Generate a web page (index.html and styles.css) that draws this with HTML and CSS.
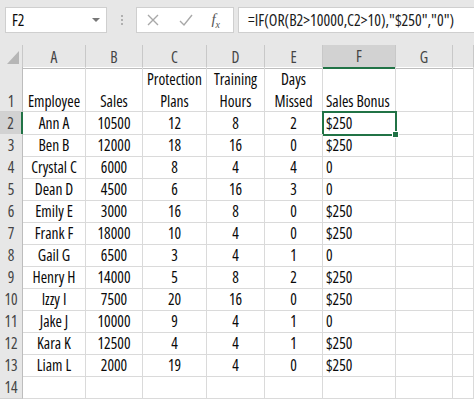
FILE: index.html
```html
<!DOCTYPE html>
<html>
<head>
    <title>Sales Bonus</title>
    <link rel="stylesheet" href="styles.css">
</head>
<body>
    <div class="toolbar">
        <div class="namebox">
            <span>F2</span>
            <span class="caret"></span>
        </div>
        <div class="grip"><i></i><i></i><i></i></div>
        <div class="fxbox">
            <svg class="icon" width="14" height="14" viewBox="0 0 14 14"><path d="M2 2L12 12M12 2L2 12" stroke="#a8a8a8" stroke-width="1.4" fill="none"/></svg>
            <svg class="icon" width="16" height="14" viewBox="0 0 16 14"><path d="M2 8L6 12L14 2" stroke="#a8a8a8" stroke-width="1.4" fill="none"/></svg>
            <span class="fx">f<sub>x</sub></span>
        </div>
        <div class="formula">=IF(OR(B2&gt;10000,C2&gt;10),"$250","0")</div>
    </div>

    <div class="sheet">
        <div class="row head">
            <div class="corner"><span class="tri"></span></div>
            <div>A</div><div>B</div><div>C</div><div>D</div><div>E</div><div class="on">F</div><div>G</div><div></div>
        </div>
        <div class="row tall">
            <div class="rh">1</div>
            <div>Employee</div><div>Sales</div><div>Protection<br>Plans</div><div>Training<br>Hours</div><div>Days<br>Missed</div><div class="l">Sales Bonus</div><div></div><div></div>
        </div>
        <div class="row">
            <div class="rh on">2</div>
            <div>Ann A</div><div>10500</div><div>12</div><div>8</div><div>2</div><div class="l active">$250<span class="handle"></span></div><div></div><div></div>
        </div>
        <div class="row">
            <div class="rh">3</div>
            <div>Ben B</div><div>12000</div><div>18</div><div>16</div><div>0</div><div class="l">$250</div><div></div><div></div>
        </div>
        <div class="row">
            <div class="rh">4</div>
            <div>Crystal C</div><div>6000</div><div>8</div><div>4</div><div>4</div><div class="l">0</div><div></div><div></div>
        </div>
        <div class="row">
            <div class="rh">5</div>
            <div>Dean D</div><div>4500</div><div>6</div><div>16</div><div>3</div><div class="l">0</div><div></div><div></div>
        </div>
        <div class="row">
            <div class="rh">6</div>
            <div>Emily E</div><div>3000</div><div>16</div><div>8</div><div>0</div><div class="l">$250</div><div></div><div></div>
        </div>
        <div class="row">
            <div class="rh">7</div>
            <div>Frank F</div><div>18000</div><div>10</div><div>4</div><div>0</div><div class="l">$250</div><div></div><div></div>
        </div>
        <div class="row">
            <div class="rh">8</div>
            <div>Gail G</div><div>6500</div><div>3</div><div>4</div><div>1</div><div class="l">0</div><div></div><div></div>
        </div>
        <div class="row">
            <div class="rh">9</div>
            <div>Henry H</div><div>14000</div><div>5</div><div>8</div><div>2</div><div class="l">$250</div><div></div><div></div>
        </div>
        <div class="row">
            <div class="rh">10</div>
            <div>Izzy I</div><div>7500</div><div>20</div><div>16</div><div>0</div><div class="l">$250</div><div></div><div></div>
        </div>
        <div class="row">
            <div class="rh">11</div>
            <div>Jake J</div><div>10000</div><div>9</div><div>4</div><div>1</div><div class="l">0</div><div></div><div></div>
        </div>
        <div class="row">
            <div class="rh">12</div>
            <div>Kara K</div><div>12500</div><div>4</div><div>4</div><div>1</div><div class="l">$250</div><div></div><div></div>
        </div>
        <div class="row">
            <div class="rh">13</div>
            <div>Liam L</div><div>2000</div><div>19</div><div>4</div><div>0</div><div class="l">$250</div><div></div><div></div>
        </div>
        <div class="row">
            <div class="rh">14</div>
            <div></div><div></div><div></div><div></div><div></div><div></div><div></div><div></div>
        </div>
    </div>
</body>
</html>
```

FILE: styles.css
```css
body {
    margin: 0;
    width: 474px;
    height: 399px;
    overflow: hidden;
    font-family: "Open Sans", sans-serif;
    font-stretch: 87.5%;
    font-size: 15.5px;
    color: #0a0a0a;
    background-color: white;
}

.toolbar {
    height: 45px;
    box-sizing: border-box;
    padding: 7px 0 0 5px;
    background-color: #e7e7e7;
    display: flex;
    align-items: flex-start;
}

.namebox,
.fxbox,
.formula {
    flex-shrink: 0;
    height: 26px;
    box-sizing: border-box;
    background-color: white;
    border: 1px solid #cfcfcf;
    display: flex;
    align-items: center;
}

.namebox {
    width: 102px;
    padding: 0 6px;
    justify-content: space-between;
}

.caret {
    width: 0;
    height: 0;
    border-left: 4px solid transparent;
    border-right: 4px solid transparent;
    border-top: 4px solid #777;
}

.grip {
    flex-shrink: 0;
    width: 29px;
    height: 26px;
    display: flex;
    flex-direction: column;
    align-items: center;
    justify-content: center;
    gap: 2px;
}

.grip i {
    width: 2px;
    height: 2px;
    background-color: #b0b0b0;
}

.fxbox {
    width: 98px;
    padding: 0 13px 0 9px;
    justify-content: space-between;
}

.fx {
    font-family: "Liberation Serif", serif;
    font-style: italic;
    font-stretch: normal;
    font-size: 15px;
    color: #555;
}

.fx sub {
    font-size: 10px;
}

.formula {
    flex: 1;
    min-width: 0;
    margin-left: 4px;
    padding-left: 9px;
    border-right: none;
    white-space: nowrap;
    overflow: hidden;
    font-size: 15.8px;
    color: #1a1a1a;
}

.row {
    display: grid;
    grid-template-columns: 23px 63px 57px 64px 58px 58px 73px 57px 1fr;
    height: 22px;
}

.row > div {
    box-sizing: border-box;
    border-right: 1px solid #dadada;
    border-bottom: 1px solid #dadada;
    display: flex;
    align-items: center;
    justify-content: center;
    white-space: nowrap;
    position: relative;
}

.row > .l {
    justify-content: flex-start;
    padding-left: 3px;
}

.row.tall {
    height: 45px;
}

/* header text sits on the gridline, like Excel's bottom alignment */
.row.tall > div {
    align-items: flex-end;
    text-align: center;
    line-height: 22px;
    border-bottom: none;
    box-shadow: inset 0 -1px #dadada;
}

.row.tall > .rh {
    box-shadow: inset 0 -1px #d0d0d0;
}

.row.head {
    background-color: #e7e7e7;
    color: #444;
}

.row.head > div {
    border-right-color: #c8c8c8;
    border-bottom-color: #bdbdbd;
}

.row.head > .on {
    background-color: #d2d2d2;
    border-bottom: 2px solid #217346;
}

.corner {
    justify-content: flex-end;
}

.tri {
    position: absolute;
    right: 3px;
    bottom: 4px;
    width: 0;
    height: 0;
    border-left: 12px solid transparent;
    border-bottom: 13px solid #b6b6b6;
}

.row > .rh {
    background-color: #e7e7e7;
    color: #444;
    border-right-color: #bdbdbd;
    border-bottom-color: #d0d0d0;
}

.row > .rh.on {
    background-color: #d2d2d2;
    border-right: 2px solid #217346;
}

.active {
    outline: 2px solid #217346;
    outline-offset: -1px;
}

.handle {
    position: absolute;
    right: -4px;
    bottom: -4px;
    width: 5px;
    height: 5px;
    background-color: #217346;
    border: 1px solid white;
    z-index: 1;
}
```
